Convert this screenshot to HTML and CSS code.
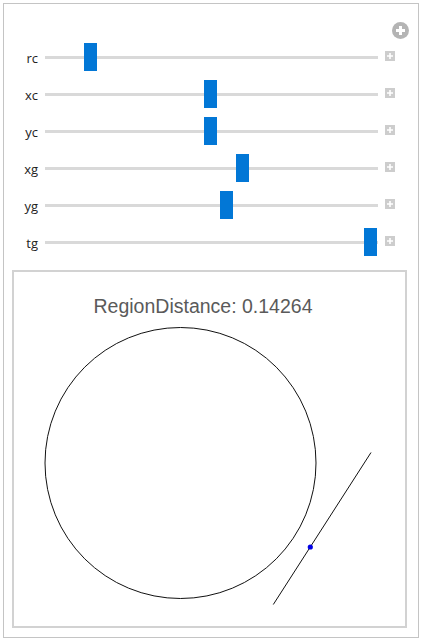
FILE: index.html
```html
<html>

<head>
    <link rel="stylesheet" href="styles.css">
</head>

<body>
    <div class="panel">
        <div class="toolbar">
            <svg class="add-all" width="17" height="17" viewBox="0 0 17 17">
                <circle cx="8.5" cy="8.5" r="8.5" fill="#b4b4b4" />
                <path d="M8.5 4v9M4 8.5h9" stroke="#fff" stroke-width="3" />
            </svg>
        </div>

        <div class="row">
            <span class="label">rc</span>
            <div class="slider"><div class="track"></div><div class="thumb" style="left: 39px"></div></div>
            <svg class="step" width="10" height="10" viewBox="0 0 10 10"><rect width="10" height="10" fill="#cdcdcd" /><path d="M5 2v6M2 5h6" stroke="#fff" stroke-width="1.6" /></svg>
        </div>
        <div class="row">
            <span class="label">xc</span>
            <div class="slider"><div class="track"></div><div class="thumb" style="left: 159px"></div></div>
            <svg class="step" width="10" height="10" viewBox="0 0 10 10"><rect width="10" height="10" fill="#cdcdcd" /><path d="M5 2v6M2 5h6" stroke="#fff" stroke-width="1.6" /></svg>
        </div>
        <div class="row">
            <span class="label">yc</span>
            <div class="slider"><div class="track"></div><div class="thumb" style="left: 159px"></div></div>
            <svg class="step" width="10" height="10" viewBox="0 0 10 10"><rect width="10" height="10" fill="#cdcdcd" /><path d="M5 2v6M2 5h6" stroke="#fff" stroke-width="1.6" /></svg>
        </div>
        <div class="row">
            <span class="label">xg</span>
            <div class="slider"><div class="track"></div><div class="thumb" style="left: 191px"></div></div>
            <svg class="step" width="10" height="10" viewBox="0 0 10 10"><rect width="10" height="10" fill="#cdcdcd" /><path d="M5 2v6M2 5h6" stroke="#fff" stroke-width="1.6" /></svg>
        </div>
        <div class="row">
            <span class="label">yg</span>
            <div class="slider"><div class="track"></div><div class="thumb" style="left: 175px"></div></div>
            <svg class="step" width="10" height="10" viewBox="0 0 10 10"><rect width="10" height="10" fill="#cdcdcd" /><path d="M5 2v6M2 5h6" stroke="#fff" stroke-width="1.6" /></svg>
        </div>
        <div class="row">
            <span class="label">tg</span>
            <div class="slider"><div class="track"></div><div class="thumb" style="left: 319px"></div></div>
            <svg class="step" width="10" height="10" viewBox="0 0 10 10"><rect width="10" height="10" fill="#cdcdcd" /><path d="M5 2v6M2 5h6" stroke="#fff" stroke-width="1.6" /></svg>
        </div>

        <div class="plot">
            <svg width="391" height="354" viewBox="0 0 391 354">
                <text class="title" x="189" y="41" text-anchor="middle">RegionDistance: 0.14264</text>
                <circle cx="166.5" cy="191" r="135.5" fill="none" stroke="#111" stroke-width="1" />
                <line x1="357" y1="180.5" x2="259.3" y2="332.5" stroke="#111" stroke-width="1" />
                <circle cx="296.3" cy="275" r="2.6" fill="#0000e6" />
            </svg>
        </div>
    </div>
</body>

</html>
```

FILE: styles.css
```css
body {
    margin: 0;
    background-color: #fff;
}

.panel {
    margin: 3px;
    width: 414px;
    height: 633px;
    border: 1px solid #c4c4c4;
    font-family: "Open Sans", "Noto Sans", sans-serif;
}

.toolbar {
    display: flex;
    justify-content: flex-end;
    height: 17px;
    margin-top: 18px;
    padding-right: 9px;
}

.row {
    display: flex;
    align-items: center;
    height: 37px;
}

.label {
    width: 34px;
    text-align: right;
    font-size: 13px;
    color: #222;
}

.slider {
    position: relative;
    width: 333px;
    height: 37px;
    margin-left: 7px;
    margin-right: 7px;
}

.track {
    position: absolute;
    left: 0;
    right: 0;
    top: 17px;
    height: 3px;
    background-color: #d9d9d9;
}

.thumb {
    position: absolute;
    top: 4px;
    width: 13px;
    height: 28px;
    background-color: #0277d6;
}

.step {
    margin-bottom: 3px;
}

.plot {
    margin: 9px 0 0 8px;
    width: 391px;
    height: 354px;
    border: 2px solid #d2d2d2;
}

.plot svg {
    display: block;
}

.title {
    font-family: "Liberation Sans", Arial, sans-serif;
    font-size: 19.5px;
    fill: #5a5a5a;
}
```
